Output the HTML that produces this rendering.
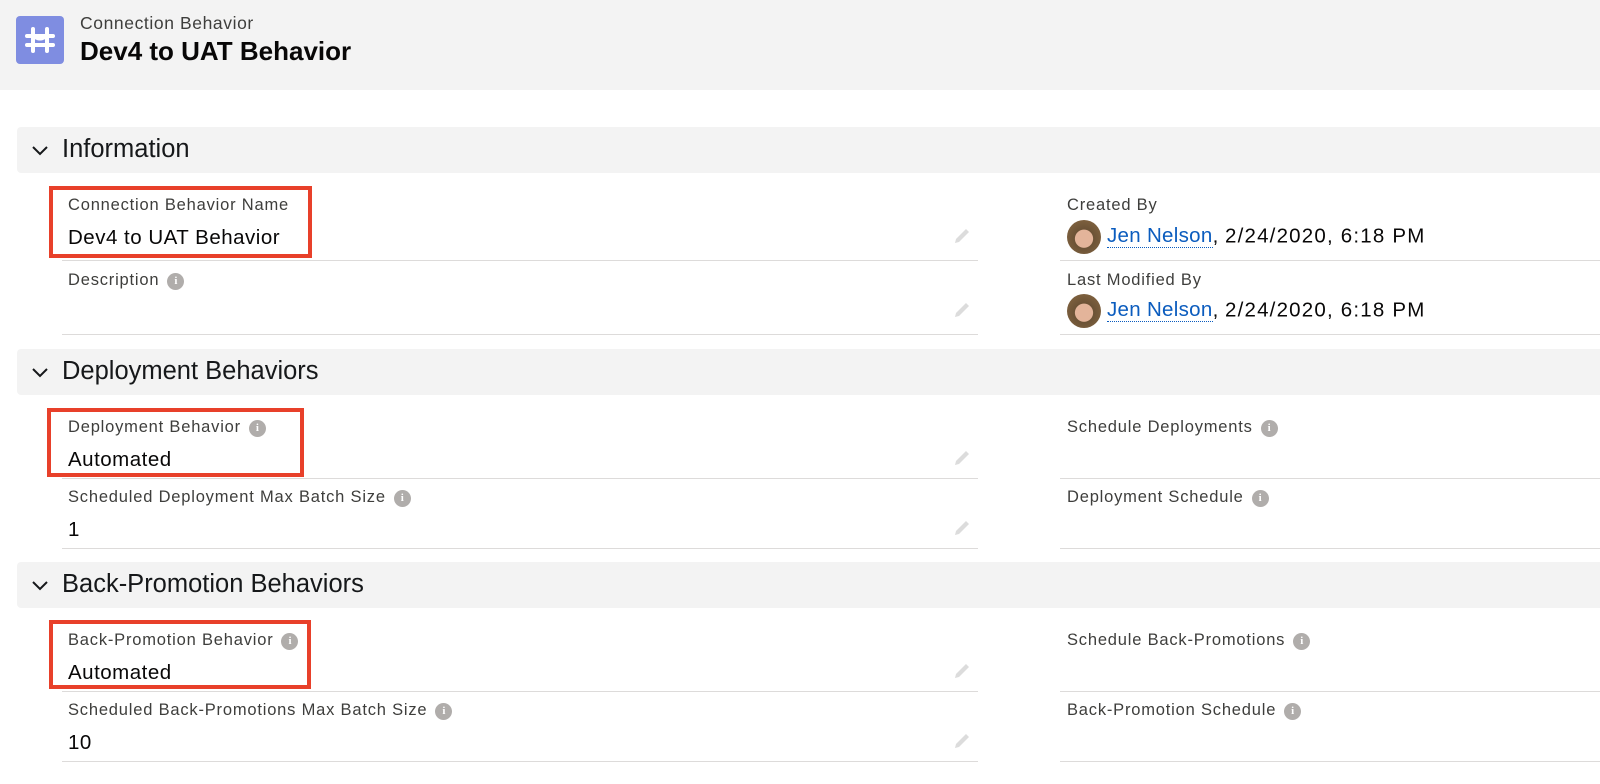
<!DOCTYPE html>
<html><head><style>
*{margin:0;padding:0;box-sizing:border-box}
body{width:1600px;height:784px;background:#fff;font-family:"Liberation Sans",sans-serif;color:#080707;position:relative;overflow:hidden}
.a{position:absolute}
.hdr{left:0;top:0;width:1600px;height:90px;background:#f3f3f3}
.bar{left:17px;width:1583px;height:46px;background:#f3f3f3;border-radius:4px 0 0 4px}
.bar span{position:absolute;left:45px;top:8px;font-size:25.5px;letter-spacing:0;color:#16181a}
.bar svg{position:absolute;left:14px;top:17px}
.line{height:1px;background:#dddbda}
.lbl{font-size:16.5px;letter-spacing:0.8px;color:#3e3e3c;white-space:nowrap}
.val{font-size:20.5px;letter-spacing:0.5px;color:#080707;white-space:nowrap}
.i{display:inline-block;width:17px;height:17px;border-radius:50%;background:#b0adab;color:#fff;font-size:11px;font-weight:bold;text-align:center;line-height:17px;vertical-align:1px;margin-left:8px;letter-spacing:0;font-family:"Liberation Serif",serif}
.red{border:4px solid #e8402a}
.pen{left:952px}
.av{display:inline-block;width:34px;height:34px;border-radius:50%;background:radial-gradient(circle at 50% 55%,#e3b49a 0 35%,#6b5236 37%,#8a6a44 100%);vertical-align:middle;margin-right:6px}
.lnk{color:#0b5cbe;border-bottom:1px dotted #0b5cbe;letter-spacing:0.3px}
.dt{letter-spacing:1.2px}
</style></head><body>
<div class="a hdr"></div>
<div class="a" style="left:16px;top:16px;width:48px;height:48px;background:#7f8de1;border-radius:4px">
<svg width="48" height="48" viewBox="0 0 48 48"><g stroke="#fff" stroke-width="4" fill="none" stroke-linecap="round"><path d="M17 13v22M31 13v22M11 20h26M11 29h26"/><path d="M17 20q7 6 14 0" stroke-width="3"/></g></svg></div>
<div class="a" style="left:80px;top:13px;font-size:17.5px;letter-spacing:0.6px;color:#3e3e3c">Connection Behavior</div>
<div class="a" style="left:80px;top:36px;font-size:26px;font-weight:bold">Dev4 to UAT Behavior</div>

<svg width="0" height="0" style="position:absolute"><defs><g id="ch"><path d="M2 3l7 7 7-7" stroke="#16181a" stroke-width="2" fill="none"/></g><g id="pn"><path d="M3 17l1-4 10-10 3 3-10 10z M3 17l4-1" fill="#dcdcdc"/></g></defs></svg>

<div class="a bar" style="top:127px"><svg width="18" height="14"><use href="#ch"/></svg><span>Information</span></div>
<div class="a bar" style="top:349px"><svg width="18" height="14"><use href="#ch"/></svg><span>Deployment Behaviors</span></div>
<div class="a bar" style="top:562px"><svg width="18" height="14"><use href="#ch"/></svg><span>Back-Promotion Behaviors</span></div>

<div class="a lbl" style="left:68px;top:196px">Connection Behavior Name</div>
<div class="a val" style="left:68px;top:226px">Dev4 to UAT Behavior</div>
<div class="a line" style="left:62px;top:260px;width:916px"></div>
<div class="a lbl" style="left:68px;top:271px">Description<span class="i">i</span></div>
<div class="a line" style="left:62px;top:334px;width:916px"></div>
<div class="a lbl" style="left:1067px;top:196px">Created By</div>
<div class="a val" style="left:1067px;top:220px"><span class="av"></span><span class="lnk">Jen Nelson</span>, <span class="dt">2/24/2020, 6:18 PM</span></div>
<div class="a line" style="left:1060px;top:260px;width:540px"></div>
<div class="a lbl" style="left:1067px;top:271px">Last Modified By</div>
<div class="a val" style="left:1067px;top:294px"><span class="av"></span><span class="lnk">Jen Nelson</span>, <span class="dt">2/24/2020, 6:18 PM</span></div>
<div class="a line" style="left:1060px;top:334px;width:540px"></div>

<div class="a lbl" style="left:68px;top:418px">Deployment Behavior<span class="i">i</span></div>
<div class="a val" style="left:68px;top:448px">Automated</div>
<div class="a line" style="left:62px;top:478px;width:916px"></div>
<div class="a lbl" style="left:68px;top:488px">Scheduled Deployment Max Batch Size<span class="i">i</span></div>
<div class="a val" style="left:68px;top:518px">1</div>
<div class="a line" style="left:62px;top:548px;width:916px"></div>
<div class="a lbl" style="left:1067px;top:418px">Schedule Deployments<span class="i">i</span></div>
<div class="a line" style="left:1060px;top:478px;width:540px"></div>
<div class="a lbl" style="left:1067px;top:488px">Deployment Schedule<span class="i">i</span></div>
<div class="a line" style="left:1060px;top:548px;width:540px"></div>

<div class="a lbl" style="left:68px;top:631px">Back-Promotion Behavior<span class="i">i</span></div>
<div class="a val" style="left:68px;top:661px">Automated</div>
<div class="a line" style="left:62px;top:691px;width:916px"></div>
<div class="a lbl" style="left:68px;top:701px">Scheduled Back-Promotions Max Batch Size<span class="i">i</span></div>
<div class="a val" style="left:68px;top:731px">10</div>
<div class="a line" style="left:62px;top:761px;width:916px"></div>
<div class="a lbl" style="left:1067px;top:631px">Schedule Back-Promotions<span class="i">i</span></div>
<div class="a line" style="left:1060px;top:691px;width:540px"></div>
<div class="a lbl" style="left:1067px;top:701px">Back-Promotion Schedule<span class="i">i</span></div>
<div class="a line" style="left:1060px;top:761px;width:540px"></div>

<svg class="a pen" style="top:226px" width="20" height="20"><use href="#pn"/></svg>
<svg class="a pen" style="top:300px" width="20" height="20"><use href="#pn"/></svg>
<svg class="a pen" style="top:448px" width="20" height="20"><use href="#pn"/></svg>
<svg class="a pen" style="top:518px" width="20" height="20"><use href="#pn"/></svg>
<svg class="a pen" style="top:661px" width="20" height="20"><use href="#pn"/></svg>
<svg class="a pen" style="top:731px" width="20" height="20"><use href="#pn"/></svg>

<div class="a red" style="left:49px;top:186px;width:263px;height:72px"></div>
<div class="a red" style="left:47px;top:408px;width:257px;height:69px"></div>
<div class="a red" style="left:49px;top:620px;width:262px;height:69px"></div>
</body></html>
